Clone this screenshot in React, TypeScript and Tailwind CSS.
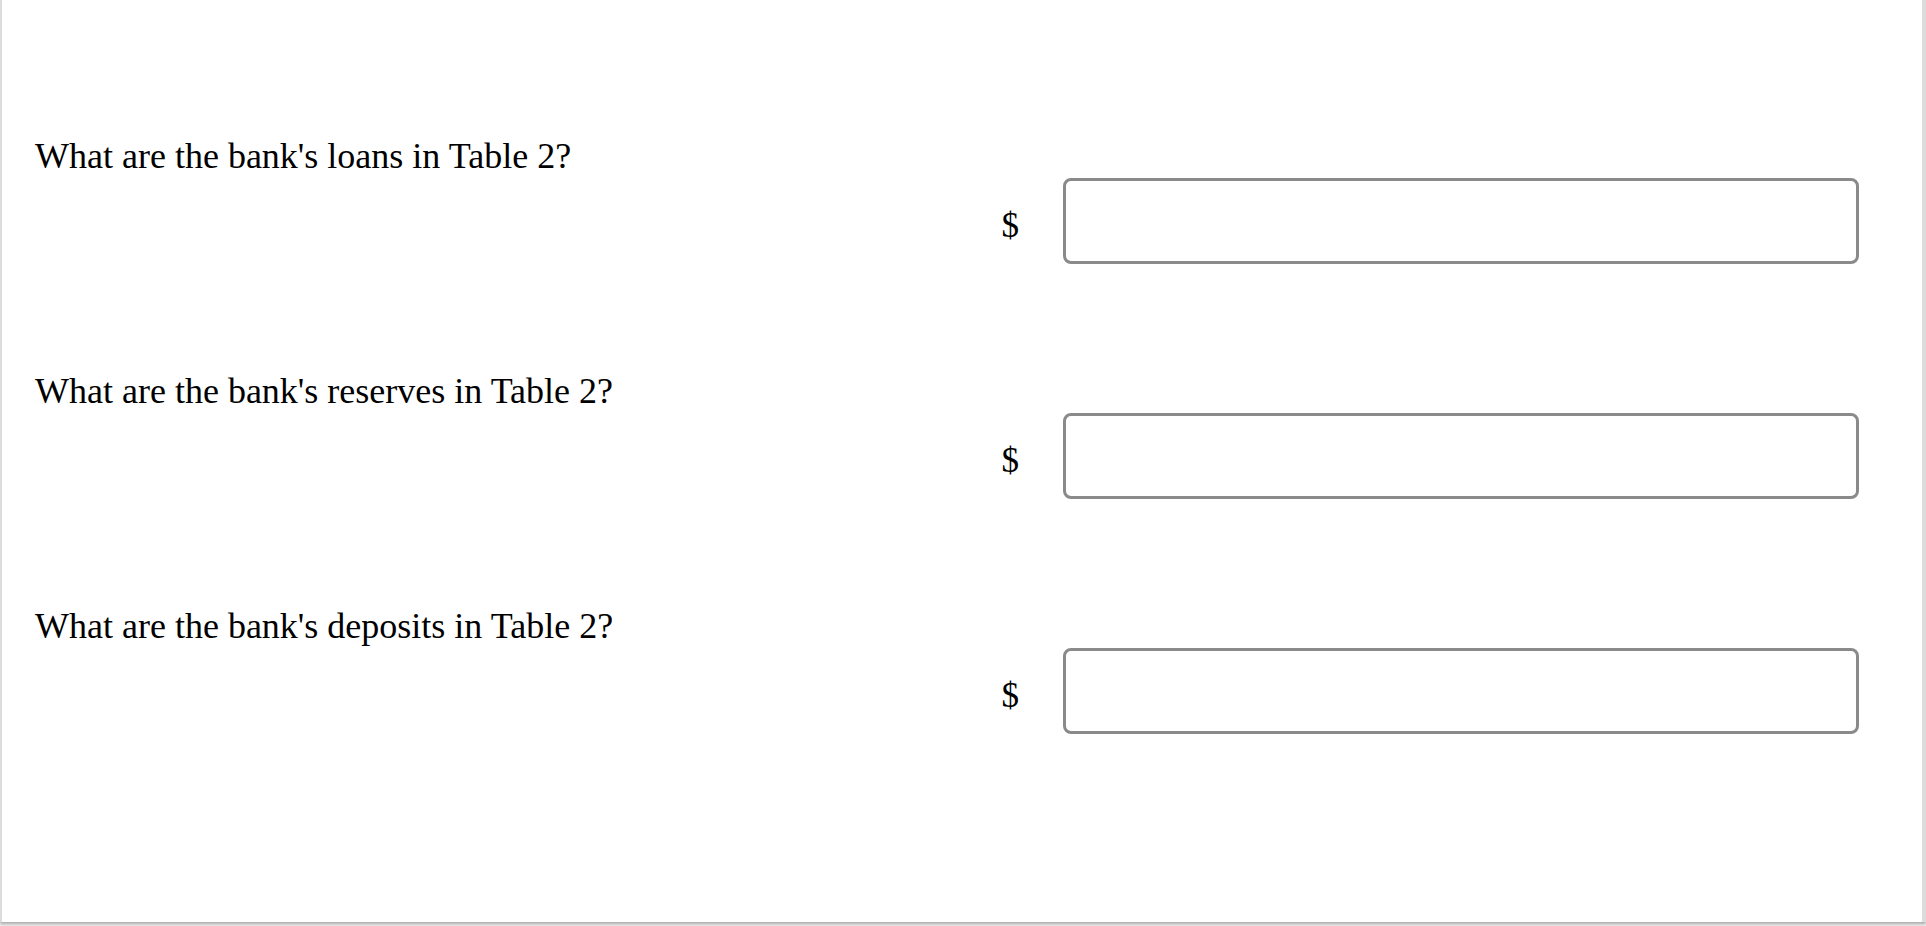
const QUESTIONS = [
  "What are the bank's loans in Table 2?",
  "What are the bank's reserves in Table 2?",
  "What are the bank's deposits in Table 2?",
];

function QuestionRow({ label }: { label: string }) {
  return (
    <div className="h-[235px]">
      <p className="text-[36px] leading-[41px] text-black">{label}</p>
      <div className="mt-[1px] flex items-center justify-end pr-[63px]">
        <span className="mr-[44px] pt-[8px] text-[35px] leading-[41px] text-black">$</span>
        <input
          type="text"
          aria-label={label}
          className="h-[86px] w-[796px] rounded-[8px] border-[3px] border-[#8a8a8a] bg-white px-3 text-[28px] outline-none"
        />
      </div>
    </div>
  );
}

export default function App() {
  return (
    <div className="h-[926px] w-full bg-[#f0f0f0]">
      <div
        className="flex h-[922px] flex-col border-l-2 border-r-4 border-[#dcdcdc] bg-white pl-[33px] pt-[136px] shadow-[0_2px_3px_rgba(0,0,0,0.3)]"
        style={{ fontFamily: '"Liberation Serif", "Times New Roman", serif' }}
      >
        {QUESTIONS.map((q) => (
          <QuestionRow key={q} label={q} />
        ))}
      </div>
    </div>
  );
}
